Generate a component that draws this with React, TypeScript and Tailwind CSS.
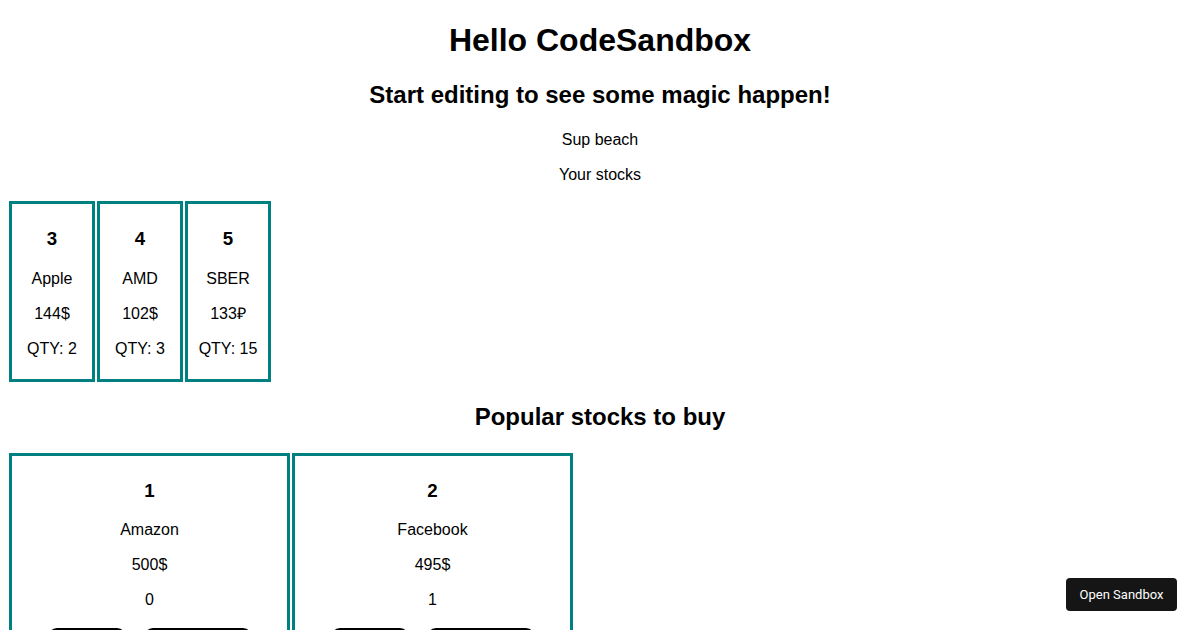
import React from 'react';

type Stock = { id: number; name: string; price: string; qty: string };

const myStocks: Stock[] = [
  { id: 3, name: 'Apple', price: '144$', qty: 'QTY: 2' },
  { id: 4, name: 'AMD', price: '102$', qty: 'QTY: 3' },
  { id: 5, name: 'SBER', price: '133₽', qty: 'QTY: 15' },
];

const popular: Stock[] = [
  { id: 1, name: 'Amazon', price: '500$', qty: '0' },
  { id: 2, name: 'Facebook', price: '495$', qty: '1' },
];

const StockCard: React.FC<{ stock: Stock; wide?: boolean }> = ({ stock, wide }) => {
  return (
    <div
      className={`${wide ? 'w-[281px]' : 'w-[86px]'} m-px border-[3px] border-[#008080] p-[5px] text-center`}
    >
      <h3 className="my-[18.72px] text-[18.72px] font-bold leading-[22px]">{stock.id}</h3>
      <p className="my-4 leading-[19px]">{stock.name}</p>
      <p className="my-4 leading-[19px]">{stock.price}</p>
      <p className="my-4 leading-[19px]">{stock.qty}</p>
      {wide && (
        <div className="mt-[18.5px] flex justify-center gap-[18px]">
          <button className="h-9 w-[78px] rounded-[9px] bg-black text-[14px] leading-[normal] text-white">Buy</button>
          <button className="h-9 w-[108px] rounded-[9px] bg-black text-[14px] leading-[normal] text-white">Sell</button>
        </div>
      )}
    </div>
  );
};

export default function App() {
  return (
    <div className="min-h-[630px] bg-white px-2 pb-10 text-black font-['Liberation_Sans',Arial,sans-serif] text-[16px] leading-[19px]">
      <div className="text-center">
        <h1 className="my-[21.44px] text-[32px] font-bold leading-[38.5px]">Hello CodeSandbox</h1>
        <h2 className="my-[19.92px] text-[24px] font-bold leading-[28.5px]">Start editing to see some magic happen!</h2>
        <p className="my-4 leading-[19px]">Sup beach</p>
        <p className="my-4 leading-[19px]">Your stocks</p>
      </div>

      {/* Your stocks */}
      <div className="flex pt-[0.5px]">
        {myStocks.map((s) => (
          <StockCard key={s.id} stock={s} />
        ))}
      </div>

      <h2 className="my-[19.92px] text-center text-[24px] font-bold leading-[28.5px]">Popular stocks to buy</h2>

      {/* Popular stocks */}
      <div className="flex pt-[1px]">
        {popular.map((s) => (
          <StockCard key={s.id} stock={s} wide />
        ))}
      </div>

      <button className="fixed right-[23px] bottom-[19px] h-[33px] w-[111px] rounded-[4px] bg-[#151515] text-[13px] leading-[normal] text-white font-['Roboto',sans-serif]">
        Open Sandbox
      </button>
    </div>
  );
}
